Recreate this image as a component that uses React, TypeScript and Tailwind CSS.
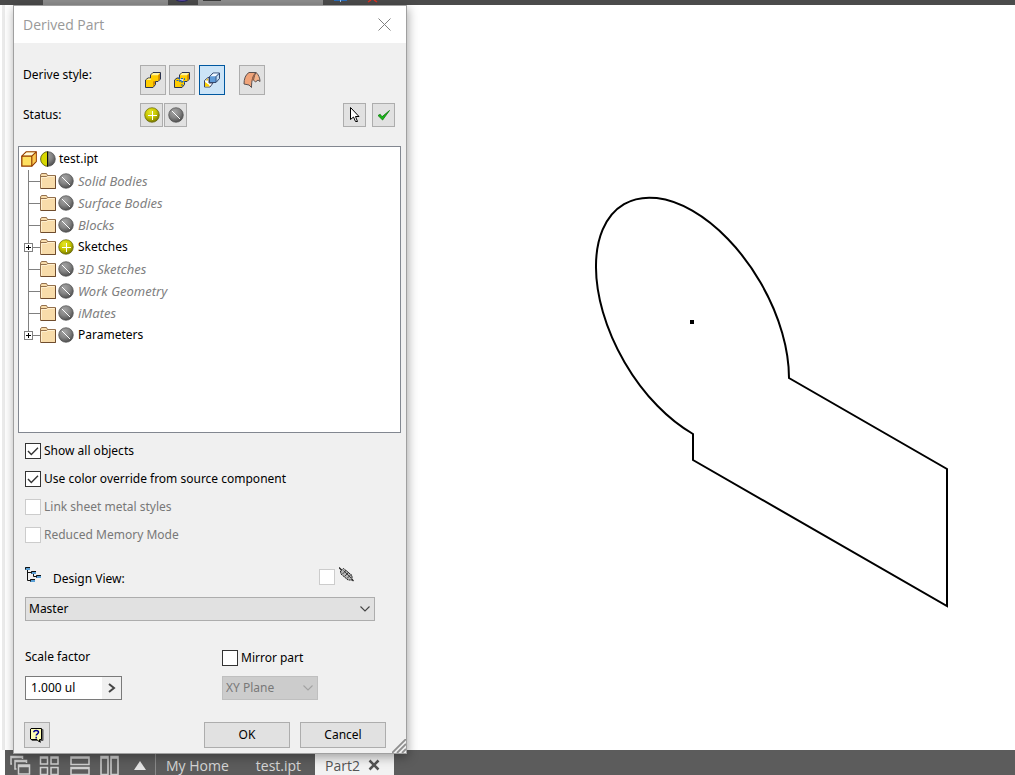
import type { ReactNode } from 'react'

type Status = 'on' | 'off' | 'mixed'

const TREE: { name: string; status: Status; expandable?: boolean; empty?: boolean }[] = [
  { name: 'Solid Bodies', status: 'off', empty: true },
  { name: 'Surface Bodies', status: 'off', empty: true },
  { name: 'Blocks', status: 'off', empty: true },
  { name: 'Sketches', status: 'on', expandable: true },
  { name: '3D Sketches', status: 'off', empty: true },
  { name: 'Work Geometry', status: 'off', empty: true },
  { name: 'iMates', status: 'off', empty: true },
  { name: 'Parameters', status: 'off', expandable: true },
]

function Gradients() {
  return (
    <svg className="absolute h-0 w-0" aria-hidden>
      <defs>
        <radialGradient id="ball-yellow" cx="0.4" cy="0.3" r="0.75">
          <stop offset="0" stopColor="#e6e62a" />
          <stop offset="0.5" stopColor="#c8c800" />
          <stop offset="1" stopColor="#6e6e00" />
        </radialGradient>
        <radialGradient id="ball-gray" cx="0.4" cy="0.3" r="0.75">
          <stop offset="0" stopColor="#a4a4a4" />
          <stop offset="0.5" stopColor="#858585" />
          <stop offset="1" stopColor="#484848" />
        </radialGradient>
      </defs>
    </svg>
  )
}

function StatusBall({ status }: { status: Status }) {
  return (
    <svg width="16" height="16" viewBox="0 0 16 16" className="shrink-0" aria-hidden>
      <circle cx="8" cy="8" r="7.3" fill={status === 'on' ? 'url(#ball-yellow)' : 'url(#ball-gray)'} stroke={status === 'on' ? '#66660a' : '#505050'} strokeWidth="0.7" />
      {status === 'on' && <path d="M8.5 4v9M4 8.500h9" stroke="#fff" strokeWidth="1" />}
      {status === 'off' && <path d="M4 4l8 8" stroke="#fff" strokeWidth="1" />}
      {status === 'mixed' && (
        <>
          <path d="M8 .7a7.3 7.3 0 0 0 0 14.6z" fill="#d8d800" stroke="#66660a" strokeWidth="0.7" />
          <path d="M7.5 .5v15" stroke="#111" />
        </>
      )}
    </svg>
  )
}

function Folder() {
  return (
    <svg width="16" height="16" viewBox="0 0 16 16" className="shrink-0" aria-hidden>
      <path d="M.5 15.500V2l1-1.500h5l1 2h8v13z" fill="#f8dcaa" stroke="#94714e" />
      <path d="M1 3.500h5.500l1-1" fill="none" stroke="#94714e" />
      <path d="M15.500 3v12.500H1" stroke="#6e4c2e" fill="none" />
      <path d="M1.500 4.500v10M1.500 4.500H7l1-1h6.500" fill="none" stroke="#fff0d0" />
    </svg>
  )
}

function PartCube() {
  return (
    <svg width="16" height="16" viewBox="0 0 16 16" className="shrink-0" aria-hidden>
      <path d="M.8 5.2L5.2.8h10v9.6l-4.4 4.8H.8z" fill="#ffe060" stroke="#943c00" strokeWidth="1.3" />
      <path d="M2 4.600l3.500-3.200h9L11 4.600z" fill="#fffbe0" />
      <path d="M11.400 5.500L14.600 2.300v8l-3.200 3.500z" fill="#fcc850" />
      <path d="M.8 5.2h10v10M10.8 5.2l4.4-4.4" fill="none" stroke="#943c00" strokeWidth="1.2" />
    </svg>
  )
}

function Branch({ expandable, last }: { expandable?: boolean; last?: boolean }) {
  return (
    <svg width="21" height="22" viewBox="0 0 21 22" className="shrink-0" aria-hidden>
      <path d={last ? 'M9.5 0v11M9.5 11.5H21' : 'M9.5 0v22M9.5 11.5H21'} fill="none" stroke="#808080" />
      {expandable && (
        <>
          <rect x="5.5" y="7.5" width="8" height="8" fill="#fff" stroke="#808080" />
          <path d="M7 11.5h5M9.5 9v5" stroke="#000" />
        </>
      )}
    </svg>
  )
}

function SolidIcon() {
  return (
    <svg width="18" height="18" viewBox="0 0 18 18" aria-hidden>
      <path d="M6.5 4l2.5-2.5h7.5V8L14 10.5h-2.5v3L9 16.5H1.5V9L4 7h2.5z" fill="#ffcc00" stroke="#2b3350" />
      <path d="M7 4.2L9.2 2H16l-2.2 2.2zM2.2 9L4.2 7.400h2.500V9z" fill="#fff3a0" />
      <path d="M14.2 4.5L16 2.5v5.3l-1.8 2zM9 10.500l2-.500V13l-2 2.600z" fill="#d08a00" />
    </svg>
  )
}

function MultiSolidIcon() {
  return (
    <svg width="18" height="18" viewBox="0 0 18 18" aria-hidden>
      <path d="M6.5 4l2.5-2.5h7.5V8L14 10.5h-2.5v3L9 16.5H1.5V9L4 7h2.5z" fill="#ffcc00" stroke="#2b3350" />
      <path d="M7 4.2L9.2 2H16l-2.2 2.2z" fill="#fff3a0" />
      <path d="M14.2 4.5L16 2.5v5.3l-1.8 2z" fill="#d08a00" />
      <path d="M7 8h3v2H7z" fill="#cfe6fa" />
      <path d="M5 7.500h6.500V12M3.500 9.500h5.500V15M6.500 6.500v4h4.500" fill="none" stroke="#1c63b8" strokeDasharray="2 1" />
    </svg>
  )
}

function BodyIcon() {
  return (
    <svg width="18" height="18" viewBox="0 0 18 18" aria-hidden>
      <path d="M1.500 16V9.500L5 6.500h1V12h4l-3 4z" fill="#fff" stroke="#3c4666" />
      <path d="M2 15.500V11l3.500 2.500L7 15.500z" fill="#ffd200" />
      <path d="M2.500 9.500L5 7.500v2z" fill="#f0c000" />
      <path d="M6.500 5.500L10 2h6.500v5.500L13 11.500H6.500z" fill="#5f9bd8" stroke="#34486c" />
      <path d="M7.300 5.300L10.200 2.500h5.600L13 5.300z" fill="#f2f8ff" />
      <path d="M13.300 5.900l2.700-2.700v4.100l-2.700 3z" fill="#c4dcf2" />
      <path d="M13 11V5.500L16 2.500" fill="none" stroke="#34486c" strokeWidth="0.800" />
    </svg>
  )
}

function SurfaceIcon() {
  return (
    <svg width="18" height="18" viewBox="0 0 18 18" aria-hidden>
      <path d="M1 13C1 8 2.500 3.500 6 1.500h7C9.500 4.500 8.500 10 8.500 16.500L6 14z" fill="#f0a47a" stroke="#5a5050" />
      <path d="M13 1.500c2.500 2 4 5.500 4 9l-2-1.500-2.500 2-2-2C11 6 11.800 3.500 13 1.500z" fill="#f5b48c" stroke="#5a5050" />
      <path d="M9 9.500C9.500 6 10.800 3.500 12.600 2 11.500 4 10.800 7 10.400 9.500z" fill="#a8623e" />
    </svg>
  )
}

function CursorIcon() {
  return (
    <svg width="12" height="18" viewBox="0 0 12 18" aria-hidden>
      <path d="M1.500 1.500v12l3-2.500 2 4.500h2l-2-5h3.500z" fill="#fff" stroke="#000" />
    </svg>
  )
}

function GreenCheck() {
  return (
    <svg width="14" height="14" viewBox="0 0 14 14" aria-hidden>
      <path d="M1 7.500l2.200-1.200L5 8.800 12.500 2.500 5.600 12z" fill="#18b818" stroke="#0a7a0a" strokeWidth="0.8" />
    </svg>
  )
}

function ViewTreeIcon() {
  return (
    <svg width="17" height="16" viewBox="0 0 17 16" aria-hidden>
      <path d="M2.500 3v10.500H5M2.500 5.500H6M8.500 7v2.500H12" fill="none" stroke="#111" />
      {[[0, 0], [6, 4], [11, 8], [5, 12]].map(([x, y]) => (
        <g key={x}>
          <rect x={x} y={y} width="5" height="3" fill="#5a9fd4" />
          <path d={`M${x + 0.5} ${y + 2.5}V${y + 0.5}H${x + 5}`} fill="none" stroke="#111" />
        </g>
      ))}
    </svg>
  )
}

function LinkIcon() {
  return (
    <svg width="15" height="15" viewBox="0 0 15 15" aria-hidden>
      <path d="M0 .500l3 3M11.500 11l3 3" stroke="#222" strokeWidth="1.300" />
      <path d="M1.500 4L4.500 1.500 13 8.500v4.500H9L2 7z" fill="#b5b5b5" stroke="#222" strokeDasharray="2 0.600" />
      <path d="M3.500 7L7.500 3M5.500 9.500L10 5M8 11.500L12 7.500M4.500 3.500l8 8" stroke="#333" strokeWidth="0.900" />
    </svg>
  )
}

function HelpIcon() {
  return (
    <svg width="16" height="17" viewBox="0 0 16 17" aria-hidden>
      <path d="M3 2.500h11v11h-2.500v2L9 13.500H3z" fill="#777" stroke="#555" />
      <path d="M2 1.500h10.500v11H10.500v2.500L8 12.500H2l-.500-.500V2z" fill="#ffffb4" stroke="#000" />
      <path d="M4.800 5.200C4.800 2.800 9.500 2.800 9.500 5.200 9.500 6.800 7.200 6.800 7.200 8.600M7.200 9.800v1.600" fill="none" stroke="#000090" strokeWidth="1.500" />
    </svg>
  )
}

function Chevron({ className }: { className: string }) {
  return (
    <svg width="10" height="6" viewBox="0 0 10 6" className={className} aria-hidden>
      <path d="M.500.500L5 5 9.500.500" fill="none" stroke="currentColor" strokeWidth="1.100" />
    </svg>
  )
}

function ToolButton({ label, selected, tall, children }: { label: string; selected?: boolean; tall?: boolean; children: ReactNode }) {
  return (
    <button
      type="button"
      aria-label={label}
      aria-pressed={selected}
      className={`flex shrink-0 items-center justify-center border ${tall ? 'h-[30px] w-[26px]' : 'h-6 w-[23px]'} ${
        selected ? 'border-[#0058a0] bg-[#cce4f7]' : 'border-[#adadad] bg-[#e1e1e1]'
      }`}
    >
      {children}
    </button>
  )
}

function CheckOption({ label, checked, disabled }: { label: string; checked?: boolean; disabled?: boolean }) {
  return (
    <label className="flex h-4 items-center gap-[3px] whitespace-nowrap has-[:disabled]:text-[#787878]">
      <span className="grid h-4 w-4 shrink-0">
        <input
          type="checkbox"
          defaultChecked={checked}
          disabled={disabled}
          className="peer col-start-1 row-start-1 h-4 w-4 appearance-none border border-[#333] bg-white disabled:border-[#ccc]"
        />
        <svg viewBox="0 0 16 16" className="pointer-events-none invisible col-start-1 row-start-1 h-4 w-4 peer-checked:visible" aria-hidden>
          <path d="M3 8l3.300 3.500L13 4.800" fill="none" stroke="#333" strokeWidth="1.400" />
        </svg>
      </span>
      {label}
    </label>
  )
}

function DerivedPartDialog() {
  return (
    <section
      role="dialog"
      aria-labelledby="dialog-title"
      className="absolute left-[13px] top-[5px] z-10 w-[394px] border border-[#a0a0a0] bg-[#f0f0f0] font-['Noto_Sans',sans-serif] text-[12px] leading-4 text-black shadow-[1px_3px_10px_rgba(0,0,0,0.35)]"
    >
      <header className="flex h-[37px] items-center justify-between bg-white pl-[9px] pr-[15px]">
        <h1 id="dialog-title" className="font-['Open_Sans',sans-serif] text-[14px] leading-5 text-[#999]">Derived Part</h1>
        <button type="button" aria-label="Close">
          <svg width="13" height="13" viewBox="0 0 13 13" aria-hidden>
            <path d="M.500.500l12 12M12.500.500l-12 12" stroke="#808080" />
          </svg>
        </button>
      </header>

      <div className="flex items-start pl-[9px] pt-[22px]">
        <span className="w-[117px] pt-[2px]">Derive style:</span>
        <div className="flex gap-[3px]">
          <ToolButton tall label="Single solid body, merged seams"><SolidIcon /></ToolButton>
          <ToolButton tall label="Solid body, keep seams"><MultiSolidIcon /></ToolButton>
        </div>
        <div className="flex gap-[14px] pl-1">
          <ToolButton tall selected label="Maintain each solid body"><BodyIcon /></ToolButton>
          <ToolButton tall label="Body as work surface"><SurfaceIcon /></ToolButton>
        </div>
      </div>

      <div className="mt-2 flex items-center pl-[9px] pr-[11px]">
        <span className="w-[117px]">Status:</span>
        <div className="flex gap-px">
          <ToolButton label="Include"><StatusBall status="on" /></ToolButton>
          <ToolButton label="Exclude"><StatusBall status="off" /></ToolButton>
        </div>
        <div className="ml-auto flex gap-[6px]">
          <ToolButton label="Select"><CursorIcon /></ToolButton>
          <ToolButton label="Accept"><GreenCheck /></ToolButton>
        </div>
      </div>

      <ul role="tree" className="ml-1 mr-[5px] mt-[19px] h-[287px] border border-[#828790] bg-white pt-px">
        <li role="treeitem" className="flex h-[22px] items-center gap-[3px] pl-[2px]">
          <PartCube />
          <StatusBall status="mixed" />
          test.ipt
        </li>
        {TREE.map((item, i) => (
          <li key={item.name} role="treeitem" className="flex h-[22px] items-center">
            <Branch expandable={item.expandable} last={i === TREE.length - 1} />
            <Folder />
            <span className="flex items-center gap-1 pl-[2px]">
              <StatusBall status={item.status} />
              <span className={item.empty ? 'text-[13px] italic text-[#808080]' : ''}>{item.name}</span>
            </span>
          </li>
        ))}
      </ul>

      <div className="mt-[10px] flex flex-col items-start gap-3 pl-[11px]">
        <CheckOption label="Show all objects" checked />
        <CheckOption label="Use color override from source component" checked />
        <CheckOption label="Link sheet metal styles" disabled />
        <CheckOption label="Reduced Memory Mode" disabled />
      </div>

      <div className="mt-6 flex items-start pl-[11px]">
        <ViewTreeIcon />
        <label htmlFor="design-view" className="w-[277px] pl-[11px] pt-1">Design View:</label>
        <div className="flex items-start gap-1">
          <input type="checkbox" disabled aria-label="Associative" className="mt-[2px] h-4 w-4 appearance-none border border-[#ccc] bg-white" />
          <LinkIcon />
        </div>
      </div>

      <div className="relative ml-[11px] mr-[31px] mt-[10px]">
        <select id="design-view" className="block h-6 w-full appearance-none border border-[#adadad] bg-[#e1e1e1] px-[3px]">
          <option>Master</option>
        </select>
        <Chevron className="pointer-events-none absolute right-[5px] top-[9px] text-[#444]" />
      </div>

      <div className="mt-[28px] flex pl-[11px]">
        <div className="flex w-[197px] flex-col gap-[11px]">
          <label htmlFor="scale" className="leading-4">Scale factor</label>
          <div className="flex h-6 w-[97px] border border-[#7a7a7a] bg-white">
            <input id="scale" type="text" defaultValue="1.000 ul" className="min-w-0 flex-1 px-[5px] outline-none" />
            <button type="button" aria-label="Scale options" className="flex w-[19px] items-center justify-center bg-[#f0f0f0]">
              <svg width="8" height="10" viewBox="0 0 8 10" aria-hidden>
                <path d="M1 1l5 4-5 4" fill="none" stroke="#444" strokeWidth="2" />
              </svg>
            </button>
          </div>
        </div>
        <div className="flex flex-col gap-[10px] pt-px">
          <CheckOption label="Mirror part" />
          <div className="relative w-24">
            <select aria-label="Mirror plane" disabled className="block h-6 w-full appearance-none border border-[#bfbfbf] bg-[#ccc] px-[3px] text-[#787878] opacity-100">
              <option>XY Plane</option>
            </select>
            <Chevron className="pointer-events-none absolute right-[5px] top-[9px] text-[#a3a3a3]" />
          </div>
        </div>
      </div>

      <footer className="mt-[22px] flex gap-[10px] pb-[5px] pl-[10px] pr-5">
        <button type="button" aria-label="Help" className="flex h-[26px] w-[26px] items-center justify-center border border-[#adadad] bg-[#e1e1e1]">
          <HelpIcon />
        </button>
        <button type="button" className="ml-auto h-[26px] w-[86px] border border-[#adadad] bg-[#e1e1e1]">OK</button>
        <button type="button" className="h-[26px] w-[86px] border border-[#adadad] bg-[#e1e1e1]">Cancel</button>
      </footer>

      <svg width="14" height="14" viewBox="0 0 14 14" className="absolute bottom-0 right-0" aria-hidden>
        <path d="M0 14L14 0M5 14l9-9M10 14l4-4" stroke="#8e8e8e" strokeWidth="1.800" />
      </svg>
    </section>
  )
}

function Toolbar() {
  return (
    <div className="flex h-[5px] shrink-0 bg-[#4b4b4b] pl-[43px]">
      <div className="w-[125px] bg-[#8e8e8e]" />
      <svg width="30" height="5" viewBox="0 0 30 5" aria-hidden>
        <ellipse cx="14" cy="-2" rx="7" ry="3.500" fill="#5a48a0" stroke="#26265a" />
      </svg>
      <div className="w-[125px] bg-[#8e8e8e]">
        <div className="ml-[5px] h-px w-[18px] bg-[#3c3c3c]" />
      </div>
      <svg width="70" height="5" viewBox="0 0 70 5" aria-hidden>
        <path d="M11 .500h13" stroke="#2a6cb8" />
        <path d="M17.500 0v2" stroke="#9cc4ec" />
        <path d="M45 2l3-2M54 2l-3-2" stroke="#e03020" strokeWidth="1.500" />
      </svg>
    </div>
  )
}

function DocumentBar() {
  return (
    <nav className="ml-[5px] flex h-[25px] shrink-0 items-start overflow-hidden bg-[#5c5c5c] pl-[5px] font-['Open_Sans',sans-serif] text-[14px] leading-8 text-[#d6d6d6]">
      <svg width="145" height="25" viewBox="10 0 145 25" className="shrink-0" fill="none" stroke="#cfcfcf" strokeWidth="1.500" aria-hidden>
        <path d="M12 14h-1V6.500h11.500V9M16.500 19H15v-8.500h11.500V13M18.500 15h11v9h-11zM18.500 16.500h11M11 7.500h11M15 11.500h11" />
        <path d="M40.500 7h7v7h-7zM51 7h7v7h-7zM40.500 17.500h7v7h-7zM51 17.500h7v7h-7zM40 8h8M50.500 8h8" />
        <path d="M71 7h18v7.500H71zM71 17.500h18v7H71zM71 8h18M71 18.500h18" />
        <path d="M101 6.500h7v18h-7zM111 6.500h7v18h-7zM101 8h7M111 8h7" />
        <path d="M134 20h12l-6-9z" fill="#e4e4e4" stroke="none" />
      </svg>
      <a href="#home" className="border-l border-[#8a8a8a] pl-[10px] pr-[13px]">My Home</a>
      <a href="#test" className="px-[14px]">test.ipt</a>
      <a href="#part2" aria-current="page" className="flex h-[25px] w-[79px] items-start justify-between bg-[#f2f2f2] pl-[10px] pr-[14px] text-[#555]">
        Part2
        <svg width="12" height="12" viewBox="0 0 12 12" className="mt-[9px]" aria-hidden>
          <path d="M1.500 1.500l9 9M10.500 1.500l-9 9" stroke="#555" strokeWidth="2.500" />
        </svg>
      </a>
    </nav>
  )
}

export default function App() {
  return (
    <div className="relative flex min-h-screen flex-col bg-white">
      <Gradients />
      <Toolbar />
      <main className="flex flex-1 bg-white">
        <div className="w-[5px] border-r-[3px] border-[#ebebeb]" />
        <svg width="370" height="425" viewBox="590 190 370 425" className="ml-[585px] mt-[185px]" role="img" aria-label="Sketch profile">
          <path d="M693 434A136.500 78.800 60 1 1 789 378L947 469V606L693 460Z" fill="none" stroke="#000" strokeWidth="2" />
          <rect x="690" y="320" width="4" height="4" />
        </svg>
      </main>
      <DocumentBar />
      <DerivedPartDialog />
    </div>
  )
}
